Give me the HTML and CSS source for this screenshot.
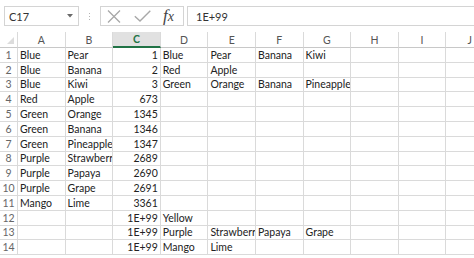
FILE: index.html
```html
<!DOCTYPE html>
<html>
<head>
<meta charset="utf-8">
<link rel="stylesheet" href="styles.css">
</head>
<body>
<div class="app">
  <div class="toolbar">
    <div class="namebox">
      <span class="ref">C17</span>
      <svg class="dd" width="6" height="4" viewBox="0 0 6 4"><polygon points="0,0 6,0 3,3.5" fill="#6a6a6a"/></svg>
    </div>
    <div class="grip"><i></i><i></i><i></i></div>
    <div class="btns">
      <svg class="ico" width="14" height="13" viewBox="0 0 14 13"><path d="M1 0.5 L13 12.5 M13 0.5 L1 12.5" stroke="#a8a8a8" stroke-width="1.3" fill="none"/></svg>
      <svg class="ico chk" width="17" height="12" viewBox="0 0 17 12"><path d="M0.8 6.2 L6 11 L16.3 0.8" stroke="#a8a8a8" stroke-width="1.4" fill="none"/></svg>
      <span class="fx">f<span class="x">x</span></span>
    </div>
    <div class="formula">1E+99</div>
  </div>
  <div class="sheet">
    <div class="h corner"><svg width="7" height="7" viewBox="0 0 7 7"><polygon points="7,0 7,7 0,7" fill="#dcdcdc"/></svg></div>
    <div class="h">A</div><div class="h">B</div><div class="h sel">C</div><div class="h">D</div><div class="h">E</div><div class="h">F</div><div class="h">G</div><div class="h">H</div><div class="h">I</div><div class="h last">J</div>

    <div class="r">1</div><div class="c">Blue</div><div class="c">Pear</div><div class="c n">1</div><div class="c">Blue</div><div class="c">Pear</div><div class="c">Banana</div><div class="c">Kiwi</div><div class="c"></div><div class="c"></div><div class="c"></div>
    <div class="r">2</div><div class="c">Blue</div><div class="c">Banana</div><div class="c n">2</div><div class="c">Red</div><div class="c">Apple</div><div class="c"></div><div class="c"></div><div class="c"></div><div class="c"></div><div class="c"></div>
    <div class="r">3</div><div class="c">Blue</div><div class="c">Kiwi</div><div class="c n">3</div><div class="c">Green</div><div class="c">Orange</div><div class="c">Banana</div><div class="c">Pineapple</div><div class="c"></div><div class="c"></div><div class="c"></div>
    <div class="r">4</div><div class="c">Red</div><div class="c">Apple</div><div class="c n">673</div><div class="c"></div><div class="c"></div><div class="c"></div><div class="c"></div><div class="c"></div><div class="c"></div><div class="c"></div>
    <div class="r">5</div><div class="c">Green</div><div class="c">Orange</div><div class="c n">1345</div><div class="c"></div><div class="c"></div><div class="c"></div><div class="c"></div><div class="c"></div><div class="c"></div><div class="c"></div>
    <div class="r">6</div><div class="c">Green</div><div class="c">Banana</div><div class="c n">1346</div><div class="c"></div><div class="c"></div><div class="c"></div><div class="c"></div><div class="c"></div><div class="c"></div><div class="c"></div>
    <div class="r">7</div><div class="c">Green</div><div class="c">Pineapple</div><div class="c n">1347</div><div class="c"></div><div class="c"></div><div class="c"></div><div class="c"></div><div class="c"></div><div class="c"></div><div class="c"></div>
    <div class="r">8</div><div class="c">Purple</div><div class="c">Strawberry</div><div class="c n">2689</div><div class="c"></div><div class="c"></div><div class="c"></div><div class="c"></div><div class="c"></div><div class="c"></div><div class="c"></div>
    <div class="r">9</div><div class="c">Purple</div><div class="c">Papaya</div><div class="c n">2690</div><div class="c"></div><div class="c"></div><div class="c"></div><div class="c"></div><div class="c"></div><div class="c"></div><div class="c"></div>
    <div class="r">10</div><div class="c">Purple</div><div class="c">Grape</div><div class="c n">2691</div><div class="c"></div><div class="c"></div><div class="c"></div><div class="c"></div><div class="c"></div><div class="c"></div><div class="c"></div>
    <div class="r">11</div><div class="c">Mango</div><div class="c">Lime</div><div class="c n">3361</div><div class="c"></div><div class="c"></div><div class="c"></div><div class="c"></div><div class="c"></div><div class="c"></div><div class="c"></div>
    <div class="r">12</div><div class="c"></div><div class="c"></div><div class="c n">1E+99</div><div class="c">Yellow</div><div class="c"></div><div class="c"></div><div class="c"></div><div class="c"></div><div class="c"></div><div class="c"></div>
    <div class="r">13</div><div class="c"></div><div class="c"></div><div class="c n">1E+99</div><div class="c">Purple</div><div class="c">Strawberry</div><div class="c">Papaya</div><div class="c">Grape</div><div class="c"></div><div class="c"></div><div class="c"></div>
    <div class="r">14</div><div class="c"></div><div class="c"></div><div class="c n">1E+99</div><div class="c">Mango</div><div class="c">Lime</div><div class="c"></div><div class="c"></div><div class="c"></div><div class="c"></div><div class="c"></div>
  </div>
</div>
</body>
</html>
```

FILE: styles.css
```css
html, body {
  margin: 0;
  padding: 0;
  background: #ffffff;
}

.app {
  width: 474px;
  height: 258px;
  overflow: hidden;
  font-family: Lato, "Open Sans", sans-serif;
  font-size: 10.5px;
  color: #222222;
}

.toolbar {
  height: 32px;
  box-sizing: border-box;
  padding-top: 6px;
  display: flex;
  align-items: flex-start;
  white-space: nowrap;
}

.namebox {
  margin-left: 4px;
  width: 75px;
  height: 20px;
  box-sizing: border-box;
  border: 1px solid #d4d4d4;
  display: flex;
  align-items: center;
  justify-content: space-between;
  padding: 0 5px 0 4px;
  font-size: 11px;
  color: #333;
}

.dd {
  display: block;
}

.grip {
  width: 21px;
  height: 20px;
  display: flex;
  flex-direction: column;
  align-items: center;
  justify-content: center;
  gap: 2px;
}

.grip i {
  display: block;
  width: 1px;
  height: 1px;
  background: #b4b4b4;
}

.btns {
  width: 84px;
  height: 20px;
  box-sizing: border-box;
  border: 1px solid #d4d4d4;
  display: flex;
  align-items: center;
  padding-left: 6px;
}

.ico {
  display: block;
}

.chk {
  margin-left: 13px;
}

.fx {
  margin-left: 12px;
  font-family: "Liberation Serif", serif;
  font-style: italic;
  font-size: 17px;
  color: #444;
  line-height: 1;
  position: relative;
  top: -1px;
}

.fx .x {
  font-size: 14px;
}

.formula {
  margin-left: 3px;
  flex: 1;
  height: 20px;
  box-sizing: border-box;
  border: 1px solid #d4d4d4;
  border-right: none;
  padding-left: 8px;
  display: flex;
  align-items: center;
  font-size: 11px;
  color: #333;
}

.sheet {
  display: grid;
  grid-template-columns: 18px repeat(10, 47.6px);
  grid-template-rows: 16px repeat(14, 14.8px);
}

.sheet > div {
  box-sizing: border-box;
  border-right: 1px solid #dadada;
  border-bottom: 1px solid #dadada;
  overflow: hidden;
  white-space: nowrap;
  display: flex;
  align-items: center;
}

.h {
  justify-content: center;
  color: #555;
  font-size: 10.5px;
  border-bottom-color: #c8c8c8 !important;
}

.h.corner {
  justify-content: flex-end;
  align-items: flex-end !important;
  padding: 0 3px 3px 0;
}

.h.sel {
  background: #e1e1e1;
  color: #217346;
  font-weight: bold;
  border-bottom: 2px solid #217346 !important;
}

.r {
  justify-content: center;
  color: #666;
  font-size: 10.5px;
}

.c {
  padding: 0 2px;
}

.c.n {
  justify-content: flex-end;
}
```
